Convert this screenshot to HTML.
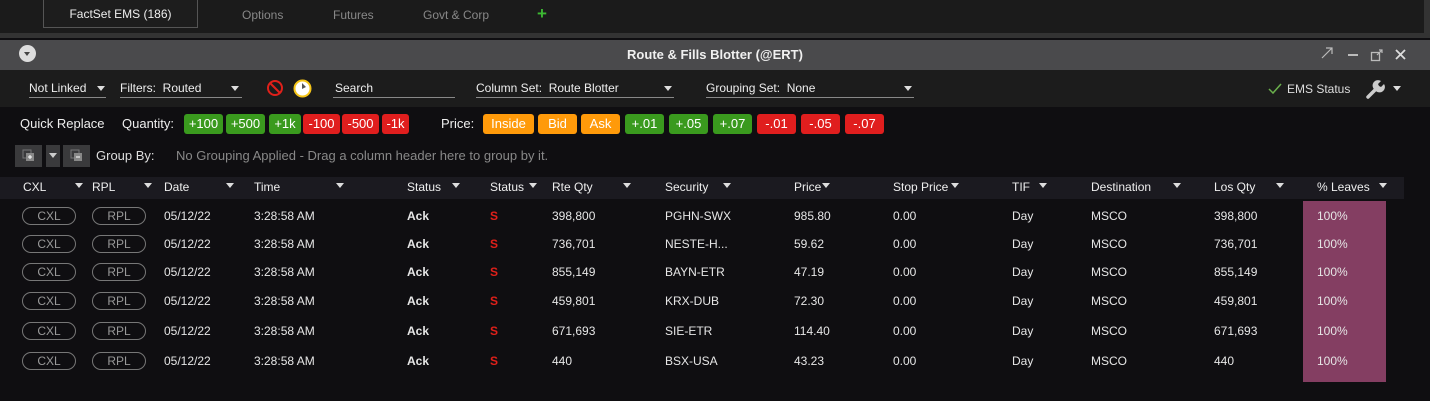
<!DOCTYPE html><html><head><style>
*{margin:0;padding:0;box-sizing:border-box}
body{width:1430px;height:401px;background:#0f0e11;font-family:"Liberation Sans",sans-serif;color:#e6e6e6;position:relative;overflow:hidden;font-size:12px}
.a{position:absolute;white-space:nowrap}
.btn{position:absolute;top:114px;height:20px;border-radius:3px;color:#fff;font-size:13px;line-height:20px;text-align:center}
.g{background:#3a9a1e}.r{background:#e01e1e}.o{background:#ff9a0a}
.dd{position:absolute;border-bottom:1px solid #888;height:20px;top:78px;font-size:12px;color:#eee;line-height:20px;white-space:nowrap}
.tri{display:inline-block;width:0;height:0;border-left:4px solid transparent;border-right:4px solid transparent;border-top:5px solid #ddd;vertical-align:middle}
.pill{position:absolute;width:54px;height:18px;border:1px solid #777;border-radius:9px;color:#999;text-align:center;line-height:16px;font-size:12px}
.hd{position:absolute;top:180px;font-size:12px;color:#eee}
.ht{position:absolute;top:183px;line-height:0}
</style></head><body>
<div class="a" style="left:0;top:0;width:1430px;height:35px;background:#1b1b1b"></div>
<div class="a" style="left:0;top:33px;width:1430px;height:5px;background:#333"></div>
<div class="a" style="left:1424px;top:0;width:6px;height:35px;background:#333"></div>
<div class="a" style="left:43px;top:0;width:155px;height:28px;background:#1d1d1d;border:1px solid #555;border-top:none;color:#eee;font-size:12px;text-align:center;line-height:28px">FactSet EMS (186)</div>
<div class="a" style="left:242px;top:8px;color:#888;font-size:12px">Options</div>
<div class="a" style="left:333px;top:8px;color:#888;font-size:12px">Futures</div>
<div class="a" style="left:423px;top:8px;color:#888;font-size:12px">Govt &amp; Corp</div>
<div class="a" style="left:537px;top:4px;color:#3cb832;font-size:17px;font-weight:bold">+</div>
<div class="a" style="left:0;top:40px;width:1430px;height:30px;background:#4a4a4c"></div>
<div class="a" style="left:19px;top:45px;width:17px;height:17px;border-radius:50%;background:#ddd"><div style="margin:7px 0 0 5px;border-left:3.5px solid transparent;border-right:3.5px solid transparent;border-top:4px solid #444;width:0"></div></div>
<div class="a" style="left:0;top:47px;width:1430px;text-align:center;font-weight:bold;font-size:13px;color:#f0f0f0">Route &amp; Fills Blotter (@ERT)</div>
<svg class="a" style="left:1320px;top:46px" width="14" height="14"><path d="M2 12L12 2M6 2h6v6" stroke="#bbb" stroke-width="1.2" fill="none"/></svg>
<div class="a" style="left:1348px;top:54px;width:10px;height:1.5px;background:#bbb"></div>
<svg class="a" style="left:1370px;top:48px" width="14" height="14"><rect x="1.5" y="4.5" width="8" height="8" stroke="#bbb" fill="none" stroke-width="1.3"/><path d="M7 7L12 2M9 2h3v3" stroke="#bbb" stroke-width="1.2" fill="none"/></svg>
<svg class="a" style="left:1395px;top:49px" width="11" height="11"><path d="M1 1L10 10M10 1L1 10" stroke="#ddd" stroke-width="1.8"/></svg>
<div class="a" style="left:0;top:70px;width:1430px;height:37px;background:#1c1c1c"></div>
<div class="dd" style="left:29px;width:77px">Not Linked</div><div class="a" style="left:97px;top:86px;line-height:0"><span class="tri"></span></div>
<div class="dd" style="left:120px;width:122px">Filters:&nbsp; Routed</div><div class="a" style="left:231px;top:86px;line-height:0"><span class="tri"></span></div>
<svg class="a" style="left:266px;top:79px" width="18" height="18"><circle cx="9" cy="9" r="7" stroke="#e0201a" stroke-width="2" fill="none"/><path d="M4 4L14 14" stroke="#e0201a" stroke-width="2"/></svg>
<svg class="a" style="left:293px;top:79px" width="19" height="19"><circle cx="9.5" cy="9.5" r="8" stroke="#f5c518" stroke-width="2" fill="#fff"/><path d="M9 4v6l4-2z" fill="#555"/></svg>
<div class="dd" style="left:333px;width:122px;padding-left:2px">Search</div>
<div class="dd" style="left:476px;width:198px">Column Set:&nbsp; Route Blotter</div><div class="a" style="left:664px;top:86px;line-height:0"><span class="tri"></span></div>
<div class="dd" style="left:706px;width:208px">Grouping Set:&nbsp; None</div><div class="a" style="left:904px;top:86px;line-height:0"><span class="tri"></span></div>
<svg class="a" style="left:1268px;top:83px" width="14" height="12"><path d="M1 6l4 4 8-9" stroke="#6ab04c" stroke-width="1.5" fill="none"/></svg>
<div class="a" style="left:1287px;top:82px;color:#ddd;font-size:12px">EMS Status</div>
<svg class="a" style="left:1366px;top:79px" width="20" height="20"><path d="M2 18L10 10" stroke="#ccc" stroke-width="3.5" stroke-linecap="round"/><path d="M9 11a5 5 0 0 1 6-9l-3 3 1 2 2 1 3-3a5 5 0 0 1-9 6z" fill="#ccc"/></svg>
<div class="a" style="left:1393px;top:86px;line-height:0"><span class="tri"></span></div>
<div class="a" style="left:20px;top:116px;font-size:13px;color:#eee">Quick Replace</div>
<div class="a" style="left:122px;top:116px;font-size:13px;color:#eee">Quantity:</div>
<div class="btn g" style="left:184px;width:39px">+100</div>
<div class="btn g" style="left:226px;width:39px">+500</div>
<div class="btn g" style="left:269px;width:32px">+1k</div>
<div class="btn r" style="left:303px;width:37px">-100</div>
<div class="btn r" style="left:342px;width:37px">-500</div>
<div class="btn r" style="left:382px;width:27px">-1k</div>
<div class="a" style="left:441px;top:116px;font-size:13px;color:#eee">Price:</div>
<div class="btn o" style="left:483px;width:51px">Inside</div>
<div class="btn o" style="left:538px;width:39px">Bid</div>
<div class="btn o" style="left:581px;width:39px">Ask</div>
<div class="btn g" style="left:625px;width:39px">+.01</div>
<div class="btn g" style="left:669px;width:39px">+.05</div>
<div class="btn g" style="left:713px;width:39px">+.07</div>
<div class="btn r" style="left:757px;width:39px">-.01</div>
<div class="btn r" style="left:801px;width:39px">-.05</div>
<div class="btn r" style="left:845px;width:39px">-.07</div>
<div class="a" style="left:15px;top:145px;width:27px;height:22px;background:#3a3a3c"><svg width="27" height="22"><rect x="8" y="5" width="8" height="8" fill="none" stroke="#777"/><rect x="11" y="8" width="8" height="8" fill="#888"/><path d="M13 12h4M15 10v4" stroke="#fff"/></svg></div>
<div class="a" style="left:46px;top:145px;width:14px;height:22px;background:#3a3a3c;text-align:center;line-height:20px"><span class="tri" style="border-top-color:#ccc"></span></div>
<div class="a" style="left:63px;top:145px;width:27px;height:22px;background:#3a3a3c"><svg width="27" height="22"><rect x="8" y="5" width="8" height="8" fill="none" stroke="#777"/><rect x="11" y="8" width="8" height="8" fill="#888"/><path d="M13 12h4" stroke="#fff"/></svg></div>
<div class="a" style="left:96px;top:148px;font-size:13px;color:#ddd">Group By:</div>
<div class="a" style="left:176px;top:148px;font-size:13px;color:#888">No Grouping Applied - Drag a column header here to group by it.</div>
<div class="a" style="left:0;top:177px;width:1404px;height:22px;background:#1b1a20"></div>
<div class="hd" style="left:23px">CXL</div><div class="ht" style="left:75px"><span class="tri"></span></div>
<div class="hd" style="left:92px">RPL</div><div class="ht" style="left:144px"><span class="tri"></span></div>
<div class="hd" style="left:164px">Date</div><div class="ht" style="left:226px"><span class="tri"></span></div>
<div class="hd" style="left:254px">Time</div><div class="ht" style="left:336px"><span class="tri"></span></div>
<div class="hd" style="left:407px">Status</div><div class="ht" style="left:452px"><span class="tri"></span></div>
<div class="hd" style="left:490px">Status</div><div class="ht" style="left:529px"><span class="tri"></span></div>
<div class="hd" style="left:552px">Rte Qty</div><div class="ht" style="left:623px"><span class="tri"></span></div>
<div class="hd" style="left:665px">Security</div><div class="ht" style="left:723px"><span class="tri"></span></div>
<div class="hd" style="left:794px">Price</div><div class="ht" style="left:822px"><span class="tri"></span></div>
<div class="hd" style="left:893px">Stop Price</div><div class="ht" style="left:951px"><span class="tri"></span></div>
<div class="hd" style="left:1012px">TIF</div><div class="ht" style="left:1039px"><span class="tri"></span></div>
<div class="hd" style="left:1091px">Destination</div><div class="ht" style="left:1173px"><span class="tri"></span></div>
<div class="hd" style="left:1214px">Los Qty</div><div class="ht" style="left:1276px"><span class="tri"></span></div>
<div class="hd" style="left:1317px">% Leaves</div><div class="ht" style="left:1379px"><span class="tri"></span></div>
<div class="a" style="left:1303px;top:201px;width:83px;height:181px;background:#843e62"></div>
<div id="rows"></div>
<script>
var d=[["398,800","PGHN-SWX","985.80"],["736,701","NESTE-H...","59.62"],["855,149","BAYN-ETR","47.19"],["459,801","KRX-DUB","72.30"],["671,693","SIE-ETR","114.40"],["440","BSX-USA","43.23"]];
var tops=[209,237,265,294,324,354],h="";
d.forEach(function(r,i){var t=tops[i];
h+='<div class="pill" style="left:22px;top:'+(t-2)+'px">CXL</div><div class="pill" style="left:92px;top:'+(t-2)+'px">RPL</div>';
function c(x,s,st){h+='<div class="a" style="left:'+x+'px;top:'+t+'px;'+(st||'')+'">'+s+'</div>'}
c(164,"05/12/22");c(254,"3:28:58 AM");c(407,"Ack","font-weight:bold");c(490,"S","color:#e0201a;font-weight:bold");
c(552,r[0]);c(665,r[1]);c(794,r[2]);c(893,"0.00");c(1012,"Day");c(1091,"MSCO");c(1214,r[0]);c(1317,"100%");});
document.getElementById("rows").innerHTML=h;
</script>
</body></html>
